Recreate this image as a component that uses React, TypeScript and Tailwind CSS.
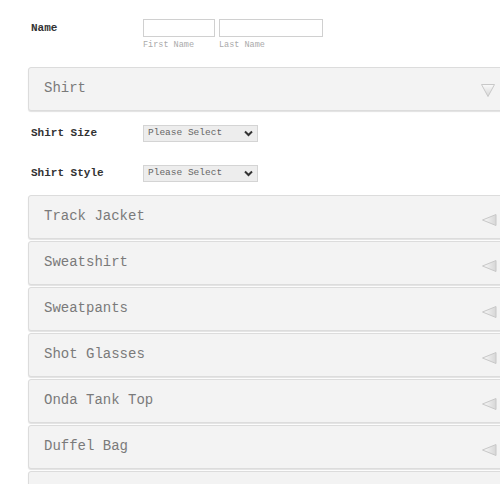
import React from 'react';

const items = ['Track Jacket', 'Sweatshirt', 'Sweatpants', 'Shot Glasses', 'Onda Tank Top', 'Duffel Bag', ''];

function Arrow({ down }: { down?: boolean }) {
  return (
    <svg width="16" height="16" viewBox="0 0 16 16" className="shrink-0">
      <defs>
        <linearGradient id={down ? 'gd' : 'gl'} x1="0" y1="0" x2={down ? '0' : '1'} y2={down ? '1' : '0'}>
          <stop offset="0" stopColor="#fafafa" />
          <stop offset="1" stopColor="#d6d6d6" />
        </linearGradient>
      </defs>
      {down ? (
        <polygon points="1.5,2.5 14.5,2.5 8,14.5" fill="url(#gd)" stroke="#c8c8c8" strokeWidth="1" />
      ) : (
        <polygon points="1.5,8 15,2.5 15,13.5" fill="url(#gl)" stroke="#c8c8c8" strokeWidth="1" />
      )}
    </svg>
  );
}

function Panel({ title, down }: { title: string; down?: boolean }) {
  return (
    <div className="ml-[28px] w-[490px] h-[44px] flex items-center justify-between bg-[#f3f3f3] border border-[#dcdcdc] rounded-[3px] shadow-[0_1px_1px_rgba(0,0,0,0.12)] pl-[15px] pr-[20px]">
      <span className="text-[14px] text-[#7a7a7a] -mt-[2px]">{title}</span>
      <span className={down ? 'mt-[2px] mr-[1px]' : 'mt-[6px]'}>
        <Arrow down={down} />
      </span>
    </div>
  );
}

function SelectRow({ label }: { label: string }) {
  return (
    <div className="flex items-center pl-[31px]">
      <div className="w-[112px] text-[11px] font-bold text-[#333]">{label}</div>
      <div className="w-[115px] h-[17px] flex items-center justify-between bg-[#ededed] border border-[#d4d4d4] pl-[4px] pr-[4px]">
        <span className="text-[9.5px] text-[#666]">Please Select</span>
        <svg width="9" height="7" viewBox="0 0 9 7">
          <path d="M1 1.5 L4.5 5 L8 1.5" fill="none" stroke="#333" strokeWidth="2" />
        </svg>
      </div>
    </div>
  );
}

export default function App() {
  return (
    <div className="w-[500px] h-[484px] overflow-hidden bg-white font-['Liberation_Mono',monospace]">
      {/* Name */}
      <div className="flex pt-[19px] pl-[31px]">
        <div className="w-[112px] text-[11px] font-bold text-[#333] pt-[1px]">Name</div>
        <div className="flex gap-[4px]">
          <div>
            <div className="w-[72px] h-[18px] border border-[#d0d0d0] bg-white" />
            <div className="text-[8.5px] text-[#aaa] mt-[3px] leading-[10px]">First Name</div>
          </div>
          <div>
            <div className="w-[104px] h-[18px] border border-[#d0d0d0] bg-white" />
            <div className="text-[8.5px] text-[#aaa] mt-[3px] leading-[10px]">Last Name</div>
          </div>
        </div>
      </div>

      <div className="mt-[17px]">
        <Panel title="Shirt" down />
      </div>

      <div className="mt-[14px] flex flex-col gap-[23px]">
        <SelectRow label="Shirt Size" />
        <SelectRow label="Shirt Style" />
      </div>

      <div className="mt-[13px] flex flex-col gap-[2px]">
        {items.map((t, i) => (
          <Panel key={i} title={t} />
        ))}
      </div>
    </div>
  );
}
